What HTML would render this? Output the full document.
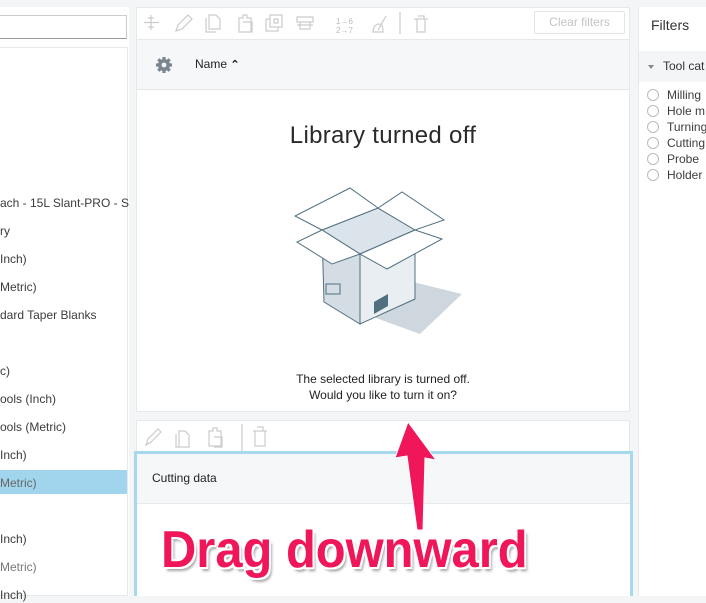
<!DOCTYPE html>
<html><head><meta charset="utf-8"><style>
*{margin:0;padding:0;box-sizing:border-box}
body{width:706px;height:596px;overflow:hidden;background:#f4f5f6;font-family:"Liberation Sans",sans-serif;position:relative;color:#222}
.abs{position:absolute}
.li{position:absolute;left:0;font-size:12px;color:#3c3c3c;line-height:16px}
.rad{position:absolute;left:647px;width:12px;height:12px;border:1px solid #bbb;border-radius:50%;background:#fff}
.rl{position:absolute;left:667px;font-size:12px;color:#3c3c3c;line-height:14px}
</style></head><body>
<div class="abs" style="left:0;top:7px;width:129px;height:589px;background:#fff"></div>
<div class="abs" style="left:0;top:15px;width:127px;height:24px;border:1px solid #ccc;border-left:none;border-bottom:1px solid #999;background:#fff"></div>
<div class="abs" style="left:0;top:47px;width:128px;height:549px;border:1px solid #e6e8ea;border-left:none;background:#fff"></div>
<div class="abs" style="left:0;top:470px;width:127px;height:24px;background:#a1d5ee"></div>
<div class="li" style="top:195px">ach - 15L Slant-PRO - S</div>
<div class="li" style="top:223px">ry</div>
<div class="li" style="top:251px">Inch)</div>
<div class="li" style="top:279px">Metric)</div>
<div class="li" style="top:307px">dard Taper Blanks</div>
<div class="li" style="top:363px">c)</div>
<div class="li" style="top:391px">ools (Inch)</div>
<div class="li" style="top:419px">ools (Metric)</div>
<div class="li" style="top:447px">Inch)</div>
<div class="li" style="top:475px;color:#666">Metric)</div>
<div class="li" style="top:531px">Inch)</div>
<div class="li" style="top:559px;color:#777">Metric)</div>
<div class="li" style="top:587px">Inch)</div>
<div class="abs" style="left:136px;top:7px;width:494px;height:405px;background:#fff;border:1px solid #e6e8ea"></div>
<div class="abs" style="left:137px;top:39px;width:492px;height:51px;background:#f6f7f8;border-top:1px solid #e6e8ea;border-bottom:1px solid #e6e8ea"></div>
<svg class="abs" style="left:136px;top:8px" height="32" width="494">
<g fill="none" stroke="#ccc" stroke-width="1.2">
<path d="M15 7v15M8 14.5h15M12 10h6M12 19h6"/>
<path d="M40 23l2-6 10-10 4 4-10 10z"/>
<path d="M73 7h7l4 4v10h-11zM70 10v14h10"/>
<path d="M103 10h4v-3h4v3h4v14h-12zM107 14h9v10h-9"/>
<path d="M134 7h12v12h-12zM138 11h4v4h-4zM130 11h4M130 11v12h12v-4"/>
<path d="M161 9h16v5h-16zM164 14v7h10v-7M161 17h16"/>
<path d="M242 22l8-14M237 24c0-5 3-8 6-8s4 4 4 8z"/>
<path d="M264 4v22"/>
<path d="M278 11h14M281 11v13h8v-13M282 8h6v3"/>
</g>
<text x="200" y="16" font-size="8" fill="#bbb" font-family="Liberation Sans">1→6</text>
<text x="200" y="25" font-size="8" fill="#bbb" font-family="Liberation Sans">2→7</text>
</svg>
<div class="abs" style="left:534px;top:11px;width:91px;height:23px;border:1px solid #e2e4e6;border-radius:2px;font-size:12px;color:#c4c4c4;text-align:center;line-height:21px">Clear filters</div>
<svg class="abs" style="left:155px;top:56px" width="18" height="18" viewBox="0 0 18 18"><g fill="#7a8590"><circle cx="9" cy="9" r="6"/><g stroke="#7a8590" stroke-width="3.2"><path d="M9 1v16M1 9h16M3.3 3.3l11.4 11.4M14.7 3.3L3.3 14.7"/></g></g><circle cx="9" cy="9" r="2.4" fill="#f6f7f8"/></svg>
<div class="abs" style="left:195px;top:57px;font-size:12px;color:#222">Name <b style="font-size:11px">⌃</b></div>
<div class="abs" style="left:136px;top:122px;width:494px;text-align:center;font-size:24px;color:#2a2a2a;letter-spacing:.3px">Library turned off</div>
<svg class="abs" style="left:292px;top:184px" width="170" height="150" viewBox="0 0 170 150">
<polygon points="88,90 170,110 128,150 40,118" fill="#cfd7de"/>
<polygon points="30,46 86,24 123,46 68,70" fill="#dbe4ea" stroke="#51707f" stroke-width="1"/>
<polygon points="30,46 68,70 68,140 32,118" fill="#d4dde4" stroke="#51707f" stroke-width="1"/>
<polygon points="68,70 123,46 123,115 68,140" fill="#e8eef2" stroke="#51707f" stroke-width="1"/>
<polygon points="30,46 3,32 58,4 86,24" fill="#fff" stroke="#51707f" stroke-width="1"/>
<polygon points="86,24 110,8 152,36 123,46" fill="#fff" stroke="#51707f" stroke-width="1"/>
<polygon points="123,46 150,55 95,85 68,70" fill="#fff" stroke="#51707f" stroke-width="1"/>
<polygon points="30,46 68,70 40,80 5,58" fill="#fff" stroke="#51707f" stroke-width="1"/>
<rect x="34" y="100" width="14" height="10" fill="none" stroke="#51707f"/>
<polygon points="82,118 96,110 96,122 82,130" fill="#51707f"/>
</svg>
<div class="abs" style="left:136px;top:371px;width:494px;text-align:center;font-size:12px;line-height:16px;color:#222">The selected library is turned off.<br>Would you like to turn it on?</div>
<div class="abs" style="left:136px;top:420px;width:494px;height:34px;background:#fff;border:1px solid #e6e8ea"></div>
<svg class="abs" style="left:136px;top:421px" width="150" height="32"><g fill="none" stroke="#ccc" stroke-width="1.2">
<path d="M10 24l2-6 10-10 3 3-10 10z"/><path d="M43 10h6l4 4v12h-10zM40 13v13h8"/><path d="M73 10h4v-3h4v3h4v15h-12zM78 16h8v10h-8"/><path d="M106 3v27"/><path d="M117 10h14M119 10v15h10v-15M121 6h6v4"/></g></svg>
<div class="abs" style="left:134px;top:451px;width:499px;height:145px;background:#fff;border:3px solid #a6d8ee;border-bottom:none"></div>
<div class="abs" style="left:137px;top:454px;width:493px;height:50px;background:#f6f7f8;border-bottom:1px solid #e6e8ea"></div>
<div class="abs" style="left:152px;top:471px;font-size:12px;color:#222">Cutting data</div>
<div class="abs" style="left:638px;top:7px;width:68px;height:589px;background:#fff;border-left:1px solid #e6e8ea"></div>
<div class="abs" style="left:651px;top:17px;font-size:14px;color:#333">Filters</div>
<div class="abs" style="left:639px;top:51px;width:67px;height:31px;background:#f4f5f6"></div>
<div class="abs" style="left:648px;top:65px;width:0;height:0;border-left:3px solid transparent;border-right:3px solid transparent;border-top:4px solid #888"></div>
<div class="abs" style="left:663px;top:59px;font-size:12px;color:#333">Tool cat</div>
<div class="rad" style="top:89px"></div><div class="rl" style="top:88px">Milling</div>
<div class="rad" style="top:105px"></div><div class="rl" style="top:104px">Hole m</div>
<div class="rad" style="top:121px"></div><div class="rl" style="top:120px">Turning</div>
<div class="rad" style="top:137px"></div><div class="rl" style="top:136px">Cutting</div>
<div class="rad" style="top:153px"></div><div class="rl" style="top:152px">Probe</div>
<div class="rad" style="top:169px"></div><div class="rl" style="top:168px">Holder</div>
<svg class="abs" style="left:380px;top:410px" width="70" height="130"><polygon points="28,12 56,50 45,48 43,120 37,120 27,46 15,48" fill="#ef1659" stroke="#fff" stroke-width="1"/></svg>
<div class="abs" style="left:161px;top:520px;font-size:52px;font-weight:bold;color:#ef1659;white-space:nowrap;transform:scaleX(.94);transform-origin:left;text-shadow:2px 2px 0 #fff,-2px -2px 0 #fff,2px -2px 0 #fff,-2px 2px 0 #fff,3px 4px 3px rgba(0,0,0,.35)">Drag downward</div>
</body></html>
